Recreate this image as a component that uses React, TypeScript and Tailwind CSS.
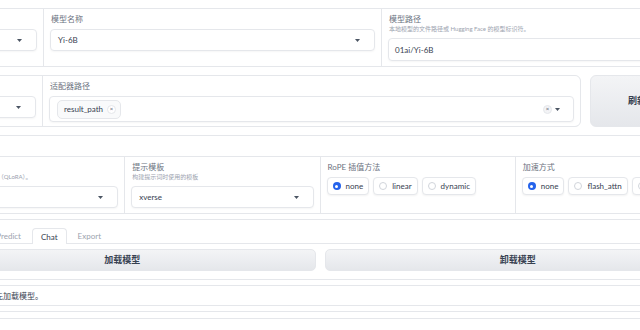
import React from 'react'

function Caret() {
  return (
    <svg width="5" height="3" viewBox="0 0 5 3" className="shrink-0">
      <path d="M0 0h5L2.5 3z" fill="#4b5563" />
    </svg>
  )
}

function Label({ text, info }: { text: string; info?: string }) {
  return (
    <div className="pl-px">
      <div className="text-[8px] leading-[10px] text-[#6b7280] whitespace-nowrap">{text}</div>
      {info && (
        <div className="mt-px text-[6px] leading-[8px] text-[#9ca3af] whitespace-nowrap">{info}</div>
      )}
    </div>
  )
}

function Dropdown({ value }: { value: string }) {
  return (
    <div className="mt-[5px] h-[22px] flex items-center justify-between rounded-[4px] border border-[#e5e7eb] bg-white pl-[7px] pr-[14px] text-[8px] text-[#374151] shadow-[0_1px_2px_rgba(0,0,0,0.04)]">
      <span>{value}</span>
      <Caret />
    </div>
  )
}

function Radio({ label, checked }: { label: string; checked?: boolean }) {
  return (
    <div className="h-[18px] shrink-0 flex items-center gap-[5px] px-[5px] rounded-[4px] border border-[#e5e7eb] bg-white shadow-[0_1px_2px_rgba(0,0,0,0.05)] text-[8px] text-[#374151]">
      {checked ? (
        <span className="w-[8px] h-[8px] rounded-full bg-[#2563eb] flex items-center justify-center">
          <span className="w-[3px] h-[3px] rounded-full bg-white" />
        </span>
      ) : (
        <span className="w-[8px] h-[8px] rounded-full border border-[#d1d5db] bg-white" />
      )}
      <span>{label}</span>
    </div>
  )
}

function Tab({ label, active }: { label: string; active?: boolean }) {
  return (
    <div
      className={
        active
          ? 'shrink-0 h-[16px] -mb-px flex items-center px-[8px] rounded-t-[4px] border border-b-0 border-[#e5e7eb] bg-white text-[8px] text-[#374151]'
          : 'shrink-0 h-[15px] flex items-center px-[8px] text-[8px] text-[#9ca3af] whitespace-nowrap'
      }
    >
      {label}
    </div>
  )
}

export default function App() {
  return (
    <div className="w-[640px] h-[330px] overflow-hidden bg-white font-['Lato','Noto_Sans_CJK_SC',sans-serif]">
      <div className="ml-[-71px] w-[782px] pt-[8px]">
        {/* Model row */}
        <div className="flex gap-px bg-[#e5e7eb] border border-[#e5e7eb] rounded-[6px] overflow-hidden">
          <div className="w-[113px] bg-white px-[6px] pt-[5px]">
            <Label text="Lang" />
            <Dropdown value="zh" />
          </div>
          <div className="w-[337px] bg-white px-[6px] pt-[5px]">
            <Label text="模型名称" />
            <Dropdown value="Yi-6B" />
          </div>
          <div className="flex-1 bg-white px-[6px] pt-[5px] pb-[5px]">
            <Label text="模型路径" info="本地模型的文件路径或 Hugging Face 的模型标识符。" />
            <div className="mt-[5px] h-[23px] flex items-center rounded-[4px] border border-[#e5e7eb] bg-white px-[6px] text-[8px] text-[#374151] shadow-[0_1px_2px_rgba(0,0,0,0.04)]">
              01ai/Yi-6B
            </div>
          </div>
        </div>

        {/* Adapter row */}
        <div className="mt-[8px] flex gap-[9px]">
          <div className="w-[652px] flex gap-px bg-[#e5e7eb] border border-[#e5e7eb] rounded-[6px] overflow-hidden">
            <div className="w-[112px] bg-white px-[6px] pt-[5px]">
              <Label text="微调方法" />
              <Dropdown value="lora" />
            </div>
            <div className="flex-1 bg-white px-[6px] pt-[5px] pb-[4px]">
              <Label text="适配器路径" />
              <div className="mt-[5px] h-[26px] flex items-center justify-between rounded-[4px] border border-[#e5e7eb] bg-white pl-[7px] pr-[13px] shadow-[0_1px_2px_rgba(0,0,0,0.04)]">
                <div className="h-[19px] flex items-center gap-[4px] rounded-[5px] border border-[#e5e7eb] bg-[#f9fafb] pl-[6px] pr-[4px] text-[8px] text-[#374151]">
                  <span>result_path</span>
                  <span className="w-[9px] h-[9px] rounded-full bg-white border border-[#e5e7eb] flex items-center justify-center text-[6px] leading-none text-[#4b5563]">
                    ×
                  </span>
                </div>
                <div className="flex items-center gap-[3px]">
                  <span className="w-[9px] h-[9px] rounded-full bg-[#f3f4f6] border border-[#e5e7eb] flex items-center justify-center text-[6px] leading-none text-[#4b5563]">
                    ×
                  </span>
                  <Caret />
                </div>
              </div>
            </div>
          </div>
          <div className="flex-1 flex items-center justify-center rounded-[6px] border border-[#e5e7eb] bg-gradient-to-b from-[#f3f4f6] to-[#e5e7eb] text-[9px] font-semibold text-[#374151]">
            刷新适配器
          </div>
        </div>

        {/* Advanced accordion */}
        <div className="mt-[8px] border border-[#e5e7eb] rounded-[6px] pb-[5px]">
          <div className="h-[20px] flex items-center justify-between px-[8px] text-[8px] text-[#374151]">
            <span>高级设置</span>
            <span className="text-[6px]">▼</span>
          </div>
          <div className="grid grid-cols-4 gap-px bg-[#e5e7eb] border-y border-[#e5e7eb]">
            <div className="bg-white px-[6px] pt-[5px] pb-[5px]">
              <Label text="量化等级" info="启用 4/8 比特模型量化（QLoRA）。" />
              <Dropdown value="none" />
            </div>
            <div className="bg-white px-[6px] pt-[5px] pb-[5px]">
              <Label text="提示模板" info="构建提示词时使用的模板" />
              <Dropdown value="xverse" />
            </div>
            <div className="bg-white px-[6px] pt-[5px]">
              <Label text="RoPE 插值方法" />
              <div className="mt-[5px] flex gap-[4px]">
                <Radio label="none" checked />
                <Radio label="linear" />
                <Radio label="dynamic" />
              </div>
            </div>
            <div className="bg-white px-[6px] pt-[5px]">
              <Label text="加速方式" />
              <div className="mt-[5px] flex gap-[4px]">
                <Radio label="none" checked />
                <Radio label="flash_attn" />
                <Radio label="unsloth" />
              </div>
            </div>
          </div>
        </div>

        {/* Tabs */}
        <div className="mt-[8px] flex items-end gap-[3px] border-b border-[#e5e7eb]">
          <div className="w-[100px] shrink-0 flex justify-end gap-[3px]">
            <Tab label="Train" />
            <Tab label="Evaluate & Predict" />
          </div>
          <Tab label="Chat" active />
          <Tab label="Export" />
        </div>

        <div className="pt-[5px]">
          <div className="flex gap-[9px]">
            <div className="flex-1 h-[22px] flex items-center justify-center rounded-[5px] border border-[#e5e7eb] bg-gradient-to-b from-[#f3f4f6] to-[#e5e7eb] text-[9px] font-semibold text-[#374151]">
              加载模型
            </div>
            <div className="flex-1 h-[22px] flex items-center justify-center rounded-[5px] border border-[#e5e7eb] bg-gradient-to-b from-[#f3f4f6] to-[#e5e7eb] text-[9px] font-semibold text-[#374151]">
              卸载模型
            </div>
          </div>

          <div className="mt-[8px] border border-[#e5e7eb] rounded-[6px] p-[5px]">
            <div className="h-[21px] flex items-center rounded-[4px] border border-[#e5e7eb] px-[3px] text-[8px] text-[#374151] whitespace-nowrap">
              模型未加载，请先加载模型。
            </div>
          </div>

          <div className="mt-[6px] h-[40px] border border-[#e5e7eb] rounded-[6px]" />
        </div>
      </div>
    </div>
  )
}
